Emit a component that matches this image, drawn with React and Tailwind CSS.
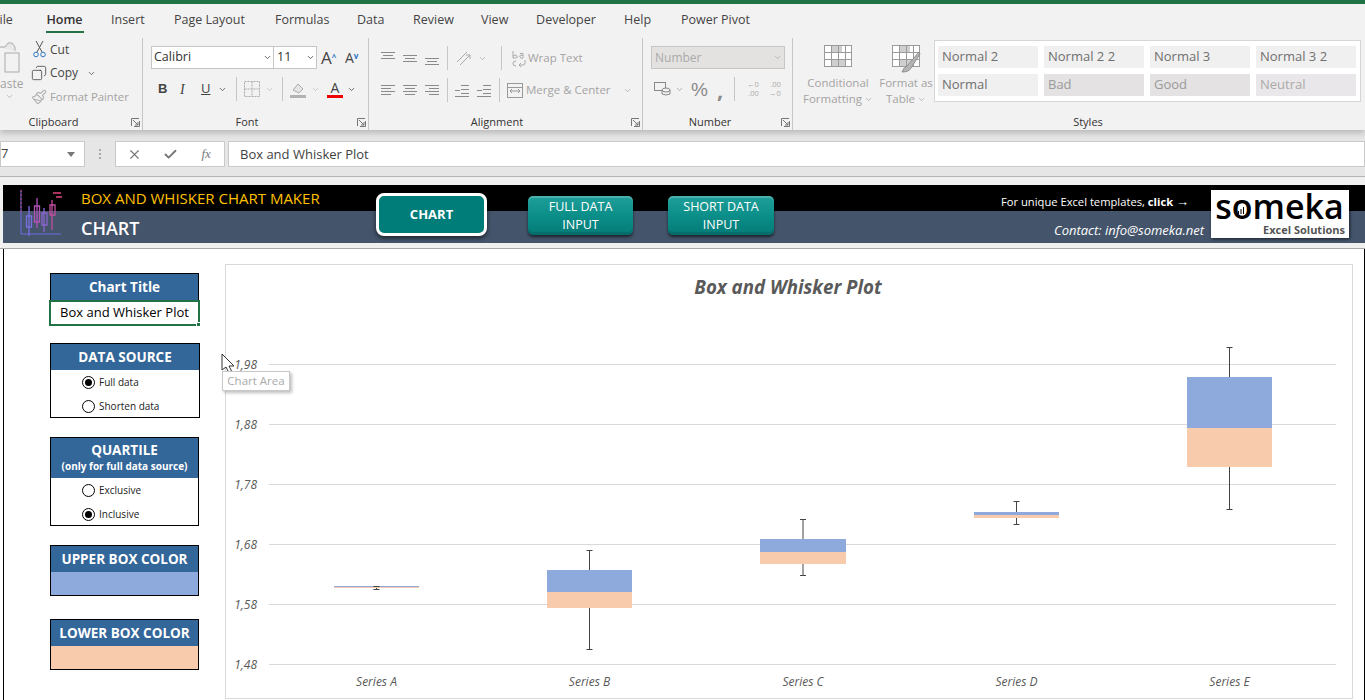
import { Copy, Paintbrush, ChevronDown, X, Check } from "lucide-react";

const tabs = [
  ["File", "w-[40px] ml-[-17px]"],
  ["Home", "w-[37px] ml-[23px]"],
  ["Insert", "w-[32px] ml-[28px]"],
  ["Page Layout", "w-[71px] ml-[31px]"],
  ["Formulas", "w-[53px] ml-[30px]"],
  ["Data", "w-[27px] ml-[29px]"],
  ["Review", "w-[40px] ml-[29px]"],
  ["View", "w-[27px] ml-[28px]"],
  ["Developer", "w-[60px] ml-[28px]"],
  ["Help", "w-[27px] ml-[28px]"],
  ["Power Pivot", "w-[68px] ml-[30px]"],
];

const Chev = ({ className = "text-[#666]" }) => <ChevronDown size={9} strokeWidth={2} className={className} />;

const Sep = () => <div className="w-px h-[24px] bg-[#c6c6c6]" />;

// three little lines, used for all the align buttons
const Lines = ({ rows, color = "#8a8a8a" }) => (
  <svg width="15" height="15" viewBox="0 0 15 15" className="shrink-0">
    {rows.map(([y, x1, x2]) => (
      <line key={y} x1={x1} x2={x2} y1={y + 0.5} y2={y + 0.5} stroke={color} />
    ))}
  </svg>
);

const Launcher = () => (
  <svg width="9" height="9" viewBox="0 0 9 9">
    <path d="M.5 8V.5H8M8.5 3v5.5H3M2 2l5 5M7 4v3H4" fill="none" stroke="#777" />
  </svg>
);

const Group = ({ label, width, labelPad = "pr-[6px]", children }) => (
  <div className={`${width} h-[92px] shrink-0 border-r border-[#c6c6c6] flex flex-col overflow-hidden`}>
    <div className="h-[77px] relative">{children}</div>
    <div className="flex items-center h-[14px] text-[11px] text-[#333]">
      <div className={`flex-1 text-center ${labelPad}`}>{label}</div>
      <div className="mr-[2px]"><Launcher /></div>
    </div>
  </div>
);

const StyleCell = ({ text, kind }) => {
  const cls = kind === "n" ? "bg-[#f1f0f0] text-[#6f6f6f]" : kind === "b" ? "bg-[#e4e2e3] text-[#9a9a9a]" : "bg-[#e9e7e9] text-[#aaa]";
  return <div className={`${cls} w-[100px] h-[22px] pl-[4px] text-[13px] leading-[21px]`}>{text}</div>;
};

const GridIcon = ({ brush }) => (
  <svg width="30" height="30" viewBox="0 0 30 30">
    <rect x="1.5" y="1.5" width="27" height="21" fill="#fff" stroke="#9a9a9a" />
    <rect x="8" y="2" width="11" height="7" fill="#cfcfcf" />
    <rect x="8" y="15" width="14" height="7" fill="#cfcfcf" />
    <path d="M1.5 8.5h27M1.5 15.5h27M8.5 1.5v21M15.5 1.5v21M22.5 1.5v21" stroke="#9a9a9a" fill="none" />
    {brush && <path d="M28 8 L16 22 q-3 1 -5 6 q7 0 9 -4 L29 10z" fill="#b5b5b5" stroke="#8f8f8f" />}
  </svg>
);

const RibbonTop = () => (
  <div className="h-[130px] bg-[#f3f2f2] shadow-[0_3px_6px_rgba(0,0,0,0.2)] relative z-10">
    <div className="h-[4px] bg-[#217346]" />
    <div className="flex h-[30px] text-[12.5px] text-[#444] items-start pt-[7px]">
      {tabs.map(([t, c]) => (
        <div key={t} className={`${c} text-center whitespace-nowrap relative shrink-0 ${t === "Home" ? "font-semibold text-[#333]" : ""}`}>
          {t}
          {t === "Home" && <div className="h-[2px] bg-[#217346] w-[38px] mt-[1px]" />}
        </div>
      ))}
    </div>
    <div className="flex pt-[4px] text-[#a3a3a3]">
      <Group label="Clipboard" width="w-[143px]" labelPad="pr-[24px]">
        <div className="flex">
          <div className="w-[33px] shrink-0 ml-[-4px] pt-[3px]">
            <svg width="28" height="32" viewBox="0 0 28 32">
              <path d="M1 6h8l3-4h4l3 4v4M1 6v22" stroke="#aaa" fill="#e8e8e8" />
              <rect x="9" y="12" width="14" height="19" fill="#f3f2f2" stroke="#aaa" />
            </svg>
            <div className="text-[12px] leading-[16px] ml-[4px] mt-[3px] w-[25px]">aste</div>
            <div className="ml-[9px]"><Chev className="text-[#aaa]" /></div>
          </div>
          <div className="flex flex-col text-[12px] ml-[2px]">
            <div className="flex items-center h-[23px] text-[#444]">
              <svg width="13" height="17" viewBox="0 0 13 17" className="mr-[4px] ml-[2px]">
                <path d="M3 0l6 11M10 0L4 11" stroke="#555" fill="none" />
                <circle cx="3" cy="13.500" r="2.300" fill="none" stroke="#2b78c5" />
                <circle cx="10" cy="13.500" r="2.300" fill="none" stroke="#2b78c5" />
              </svg>
              <span>Cut</span>
            </div>
            <div className="flex items-center h-[24px] text-[#444]"><Copy size={16} className="mr-[3px] text-[#333] scale-x-[-1]" strokeWidth={1.1} /><span>Copy</span><span className="ml-[9px]"><Chev className="text-[#444]" /></span></div>
            <div className="flex items-center h-[24px]"><Paintbrush size={16} className="mr-[3px] text-[#b0b0b0]" strokeWidth={1.6} /><span className="whitespace-nowrap text-[11.3px]">Format Painter</span></div>
          </div>
        </div>
      </Group>
      <Group label="Font" width="w-[226px]">
        <div className="pl-[8px] pt-[8px]">
          <div className="flex items-center h-[23px]">
            <div className="w-[123px] h-[23px] bg-white border border-[#c6c6c6] flex items-center pl-[2px] pr-[1px] text-[12.5px] text-[#333]"><span className="flex-1">Calibri</span><Chev className="text-[#333]" /></div>
            <div className="w-[43px] h-[23px] bg-white border border-l-0 border-[#c6c6c6] flex items-center pl-[3px] pr-[1px] text-[12.5px] text-[#333]"><span className="flex-1">11</span><Chev className="text-[#333]" /></div>
            <div className="ml-[4px] text-[17px] text-[#444] w-[24px] leading-none">A<sup className="text-[8px] text-[#2b78c5] font-bold">^</sup></div>
            <div className="text-[14px] text-[#444] w-[20px] leading-none">A<sup className="text-[8px] text-[#2b78c5] font-bold">v</sup></div>
          </div>
          <div className="flex items-center mt-[8px] h-[24px] text-[#444]">
            <span className="w-[22px] ml-[7px] font-bold text-[13px] font-['Liberation_Sans',sans-serif]">B</span>
            <span className="w-[21px] italic text-[14px] font-['Liberation_Serif',serif]">I</span>
            <span className="w-[17px] underline text-[13px]">U</span>
            <Chev className="text-[#444]" />
            <span className="ml-[9px]"><Sep /></span>
            <svg width="16" height="16" viewBox="0 0 16 16" className="ml-[7px]"><path d="M.5.5h15v15H.5zM8 .5v15M.5 8h15" fill="none" stroke="#aaa" strokeDasharray="2 1" /></svg>
            <span className="ml-[5px]"><Chev className="text-[#bbb]" /></span>
            <span className="ml-[8px]"><Sep /></span>
            <svg width="17" height="17" viewBox="0 0 17 17" className="ml-[7px]"><path d="M3 9l5-6 5 5-4 4z" fill="#e4e4e4" stroke="#aaa" /><rect x="0" y="14" width="16" height="3" fill="#b2b2b2" /></svg>
            <span className="ml-[4px]"><Chev className="text-[#bbb]" /></span>
            <div className="ml-[7px] flex flex-col items-center w-[16px]">
              <span className="text-[14px] leading-[14px] text-[#444]">A</span>
              <div className="w-[16px] h-[3px] bg-[#f00000]" />
            </div>
            <span className="ml-[4px]"><Chev className="text-[#444]" /></span>
          </div>
        </div>
      </Group>
      <Group label="Alignment" width="w-[274px]">
        <div className="pl-[12px] pt-[11px]">
          <div className="flex items-center h-[18px] gap-[7px]">
            <Lines rows={[[1, 0, 14], [4, 2, 12], [7, 0, 14]]} />
            <Lines rows={[[4, 0, 14], [7, 2, 12], [10, 0, 14]]} />
            <Lines rows={[[7, 0, 14], [10, 2, 12], [13, 0, 14]]} />
            <Sep />
            <svg width="17" height="16" viewBox="0 0 17 16"><path d="M2 12L12 2M5 15L15 5M11 5h4v4" fill="none" stroke="#aaa" /></svg>
            <span className="ml-[-1px]"><Chev className="text-[#aaa]" /></span>
            <span className="ml-[7px]"><Sep /></span>
            <span className="flex items-center ml-[2px]">
              <svg width="17" height="17" viewBox="0 0 17 17" className="shrink-0"><path d="M2 1v7M2 6q2-2 4 0t-4 2M9 3.500h3M12 3.500v4.500M12 5.500q-4-1-3 1.500t3 1M5 11q-3 0-3 2.500t3 2.500M14 10v3q0 2-2 2H8l2-2M8 15l2 2" fill="none" stroke="#aaa" /></svg>
              <span className="text-[11.500px] whitespace-nowrap">Wrap Text</span>
            </span>
          </div>
          <div className="flex items-center h-[24px] mt-[11px] gap-[7px]">
            <Lines rows={[[2, 0, 14], [5, 0, 10], [8, 0, 14], [11, 0, 10]]} />
            <Lines rows={[[2, 0, 14], [5, 2, 12], [8, 0, 14], [11, 2, 12]]} />
            <Lines rows={[[2, 0, 14], [5, 4, 14], [8, 0, 14], [11, 4, 14]]} />
            <Sep />
            <Lines rows={[[2, 6, 14], [6, 6, 14], [7, 0, 5], [10, 6, 14], [13, 0, 14]]} />
            <Lines rows={[[2, 6, 14], [6, 6, 14], [7, 0, 5], [10, 6, 14], [13, 0, 14]]} />
            <Sep />
            <span className="flex items-center">
              <svg width="19" height="15" viewBox="0 0 19 15" className="shrink-0"><rect x=".5" y=".5" width="15" height="14" fill="none" stroke="#999" /><path d="M.5 4.5h15M3 8h10M3 8l2-2M3 8l2 2M13 8l-2-2M13 8l-2 2" fill="none" stroke="#999" /></svg>
              <span className="text-[11.500px] whitespace-nowrap">Merge &amp; Center</span>
            </span>
            <span className="ml-[5px]"><Chev className="text-[#aaa]" /></span>
          </div>
        </div>
      </Group>
      <Group label="Number" width="w-[150px]" labelPad="pr-[4px]">
        <div className="pl-[8px] pt-[8px]">
          <div className="w-[134px] h-[23px] bg-[#e3e2e1] border border-[#c6c6c6] flex items-center pl-[3px] pr-[2px] text-[12px] text-[#aaa]"><span className="flex-1">Number</span><Chev className="text-[#aaa]" /></div>
          <div className="flex items-center h-[24px] mt-[8px] ml-[3px]">
            <svg width="17" height="14" viewBox="0 0 17 14"><rect x=".5" y=".5" width="11" height="8" fill="none" stroke="#888" /><ellipse cx="12" cy="8" rx="4" ry="2" fill="#f3f2f2" stroke="#888" /><path d="M8 8v4q4 2 8 0V8" fill="none" stroke="#888" /></svg>
            <span className="ml-[4px]"><Chev className="text-[#999]" /></span>
            <span className="ml-[7px] text-[19px] leading-none text-[#8a8a8a] font-['Liberation_Sans',sans-serif]">%</span>
            <span className="ml-[9px] w-[9px] text-[22px] font-bold leading-[14px] text-[#8a8a8a]">,</span>
            <span className="ml-[8px]"><Sep /></span>
            <span className="ml-[7px] w-[17px] text-[7.500px] leading-[9px] text-[#aaa] text-right">←0<br />.00</span>
            <span className="ml-[5px] w-[17px] text-[7.500px] leading-[9px] text-[#aaa] text-right">.00<br />→0</span>
          </div>
        </div>
      </Group>
      <div className="flex-1 h-[92px] flex flex-col">
        <div className="h-[76px] flex">
          <div className="w-[141px] flex text-[11.500px] leading-[16px] text-[#a3a3a3] text-center shrink-0 pt-[6px]">
            <div className="w-[80px] ml-[5px] flex flex-col items-center"><GridIcon /><span className="mt-[1px]">Conditional</span><span className="flex items-center gap-[2px]">Formatting <Chev className="text-[#aaa]" /></span></div>
            <div className="w-[56px] flex flex-col items-center"><GridIcon brush /><span className="mt-[1px] whitespace-nowrap">Format as</span><span className="flex items-center gap-[2px]">Table <Chev className="text-[#aaa]" /></span></div>
          </div>
          <div className="w-[427px] h-[62px] mt-[2px] bg-white border border-[#d6d6d6] pl-[3px] pt-[5px] grid grid-cols-[100px_100px_100px_100px] grid-rows-[22px_22px] gap-[6px] shrink-0">
            <StyleCell text="Normal 2" kind="n" />
            <StyleCell text="Normal 2 2" kind="n" />
            <StyleCell text="Normal 3" kind="n" />
            <StyleCell text="Normal 3 2" kind="n" />
            <StyleCell text="Normal" kind="n" />
            <StyleCell text="Bad" kind="b" />
            <StyleCell text="Good" kind="b" />
            <StyleCell text="Neutral" kind="x" />
          </div>
        </div>
        <div className="h-[14px] text-[11px] text-[#333] text-center pl-[18px]">Styles</div>
      </div>
    </div>
  </div>
);

const FormulaBar = () => (
  <div className="h-[47px] bg-[#e6e6e6] border-b border-[#b5b5b5] pt-[11px] flex text-[13px] text-[#444]">
    <div className="w-[85px] h-[26px] bg-white border border-[#c9c9c9] flex items-center justify-between pr-[9px] pl-0 shrink-0">
      <span>7</span>
      <span className="w-0 h-0 border-x-[4px] border-x-transparent border-t-[5px] border-t-[#777]" />
    </div>
    <div className="w-[30px] h-[26px] flex flex-col items-center justify-center gap-[2px] shrink-0">
      <span className="w-[2px] h-[2px] bg-[#aaa]" />
      <span className="w-[2px] h-[2px] bg-[#aaa]" />
      <span className="w-[2px] h-[2px] bg-[#aaa]" />
    </div>
    <div className="w-[110px] h-[26px] bg-white border border-[#c9c9c9] flex items-center text-[#777] shrink-0">
      <span className="w-[37px] flex justify-center"><X size={15} strokeWidth={1.8} /></span>
      <span className="w-[36px] flex justify-center"><Check size={15} strokeWidth={3} /></span>
      <span className="w-[36px] text-center italic font-['Liberation_Serif',serif] text-[13px]">fx</span>
    </div>
    <div className="ml-[3px] flex-1 h-[26px] bg-white border border-[#c9c9c9] pl-[11px] leading-[24px] text-[#3f3f3f]">Box and Whisker Plot</div>
  </div>
);

const BevelButton = ({ children, w, ml }) => (
  <div className={`${w} ${ml} h-[39px] mt-[11px] rounded-[5px] shadow-[0_2px_3px_rgba(0,0,0,0.6),inset_0_2px_1px_rgba(255,255,255,0.2),inset_0_-3px_1px_rgba(0,0,0,0.12)] bg-gradient-to-b from-[#1f9f9a] via-[#0b8e89] to-[#067b77] text-white text-[12.5px] leading-[18px] text-center pt-[2px] shrink-0`}>
    {children}
  </div>
);

const Banner = () => (
  <div className="ml-[3px] h-[58px] bg-[linear-gradient(#000_26px,#44546a_26px)] flex">
    <svg width="78" height="58" viewBox="0 0 78 58" className="shrink-0">
      <path d="M18 5v44h40" fill="none" stroke="#6c6be0" strokeWidth="1" />
      <path d="M18 5v24" fill="none" stroke="#c0447f" strokeDasharray="2 2" />
      <g fill="none" strokeWidth="1.3">
        <path d="M26 21v30M23.500 31h5v11h-5z" stroke="#7a6fe0" />
        <path d="M34 13v30M31.500 21h5v16h-5z" stroke="#b054b5" />
        <path d="M41 23v24M39 28h5v12h-5z" stroke="#8a66d0" />
        <path d="M49 15v30M47 20h5v10h-5z" stroke="#c04f9f" />
        <path d="M50 8h8M53 12h6" stroke="#e0457f" />
      </g>
    </svg>
    <div className="w-[295px] shrink-0 flex flex-col">
      <div className="h-[26px] text-[15px] text-[#ffc000] leading-[27px] whitespace-nowrap">BOX AND WHISKER CHART MAKER</div>
      <div className="text-[18px] font-semibold text-white leading-[34px]">CHART</div>
    </div>
    <div className="w-[111px] h-[43px] mt-[8px] rounded-[8px] border-[3px] border-white bg-[#007d78] shadow-[0_2px_4px_rgba(0,0,0,0.6)] text-white font-bold text-[13px] leading-[37px] text-center shrink-0">CHART</div>
    <BevelButton w="w-[105px]" ml="ml-[41px]">FULL DATA<br />INPUT</BevelButton>
    <BevelButton w="w-[106px]" ml="ml-[35px]">SHORT DATA<br />INPUT</BevelButton>
    <div className="w-[430px] shrink-0 text-white text-right flex flex-col">
      <div className="text-[11.200px] leading-[33px] pr-[15px] whitespace-nowrap">For unique Excel templates, <b>click <span className="font-['Liberation_Sans',sans-serif] text-[13px]">→</span></b></div>
      <div className="text-[13px] italic leading-[25px]">Contact: info@someka.net</div>
    </div>
    <div className="relative w-[138px] h-[48px] ml-[7px] mt-[5px] bg-white shadow-[1px_1px_3px_rgba(0,0,0,0.6)] shrink-0 flex flex-col pr-[4px] text-right">
      <div className="h-[33px] text-[34px] leading-[33px] font-semibold text-black text-center pl-[3px]">someka</div>
      <div className="text-[11px] leading-[13px] font-bold text-[#555]">Excel Solutions</div>
      <svg width="8" height="8" viewBox="0 0 8 8" className="absolute left-[26px] top-[16px]"><path d="M1 8V5h1v3zM3.500 8V3h1v5zM6 8V1h1v7z" fill="#000" /></svg>
    </div>
  </div>
);

const Head = ({ children, h = "h-[26px]" }) => (
  <div className={`${h} bg-[#336699] text-white font-bold text-[13.500px] flex flex-col items-center justify-center leading-[18px] whitespace-nowrap`}>
    {children}
  </div>
);

const Radio = ({ label, on }) => (
  <div className="flex items-center h-[24px] pl-[31px] pt-[1px] text-[10px] text-[#222]">
    <span className="w-[13px] h-[13px] rounded-full border border-black flex items-center justify-center mr-[4px]">
      {on && <span className="w-[7px] h-[7px] rounded-full bg-black" />}
    </span>
    {label}
  </div>
);

const Side = () => (
  <div className="w-[149px] ml-[46px] mt-[24px] shrink-0">
    <div className="border border-black border-b-0">
      <Head>Chart Title</Head>
    </div>
    <div className="relative border-2 border-[#217346] h-[26px] -mx-[1px] text-[13px] leading-[20px] text-center text-black whitespace-nowrap">
      Box and Whisker Plot
      <span className="absolute -right-[3px] -bottom-[3px] w-[5px] h-[5px] bg-[#217346] border border-white" />
    </div>
    <div className="border border-black mt-[17px] h-[75px] w-[150px]">
      <Head>DATA SOURCE</Head>
      <Radio label="Full data" on />
      <Radio label="Shorten data" />
    </div>
    <div className="border border-black mt-[19px] h-[89px]">
      <Head h="h-[40px] pb-[2px]">
        <span>QUARTILE</span>
        <span className="text-[10px] leading-[14px]">(only for full data source)</span>
      </Head>
      <Radio label="Exclusive" />
      <Radio label="Inclusive" on />
    </div>
    <div className="border border-black mt-[19px] h-[51px]">
      <Head>UPPER BOX COLOR</Head>
      <div className="h-[23px] bg-[#8ea9db]" />
    </div>
    <div className="border border-black mt-[23px] h-[51px]">
      <Head>LOWER BOX COLOR</Head>
      <div className="h-[23px] bg-[#f8cbad]" />
    </div>
  </div>
);

const grid = [[364.5, "1,98"], [424.5, "1,88"], [484.5, "1,78"], [544.5, "1,68"], [604.5, "1,58"], [664.5, "1,48"]];
// x, width, upper top, middle, lower bottom, whisker top, whisker bottom
const series = [
  ["Series A", 334, 85, 586, 587, 588, 586, 589],
  ["Series B", 547, 85, 570, 592, 608, 550, 649],
  ["Series C", 760, 86, 539, 552, 564, 519, 575],
  ["Series D", 974, 85, 512, 515, 518, 501, 524],
  ["Series E", 1187, 85, 377, 428, 467, 347, 509],
];

const Chart = () => (
  <svg width="1128" height="435" viewBox="225 264 1128 435" className="ml-[26px] mt-[15px] shrink-0 block">
    <rect x="225.5" y="264.5" width="1127" height="434" fill="#fff" stroke="#d9d9d9" />
    <text x="788" y="294" textAnchor="middle" fontSize="18.700" fontWeight="700" fontStyle="italic" fill="#595959">Box and Whisker Plot</text>
    {grid.map(([y, t]) => (
      <g key={t}>
        <line x1="269" x2="1336" y1={y} y2={y} stroke="#d9d9d9" />
        <text x="257" y={y + 4} textAnchor="end" fontSize="12" fontStyle="italic" fill="#595959">{t}</text>
      </g>
    ))}
    {series.map(([name, x, w, a, b, c, t, bot]) => {
      const mid = x + w / 2;
      return (
        <g key={name}>
          <rect x={x} y={a} width={w} height={b - a} fill="#8ea9db" />
          <rect x={x} y={b} width={w} height={c - b} fill="#f8cbad" />
          <path d={`M${mid} ${t}V${a}M${mid} ${c}V${bot}M${mid - 3} ${t}.5h6M${mid - 3} ${bot}.5h6`} stroke="#444" fill="none" />
          <text x={mid} y="686" textAnchor="middle" fontSize="12" fontStyle="italic" fill="#595959">{name}</text>
        </g>
      );
    })}
  </svg>
);

export default function App() {
  return (
    <div className="w-[1365px] h-[700px] overflow-hidden bg-white relative font-['Open_Sans',sans-serif]">
      <RibbonTop />
      <FormulaBar />
      <div className="bg-[#f0f0f0] pt-[8px] h-[72px] border-b border-[#a8a8a8]">
        <Banner />
      </div>
      <div className="flex ml-[3px] border-l border-black h-[451px] border-r mr-0">
        <Side />
        <Chart />
      </div>
      {/* mouse pointer and chart tooltip */}
      <svg width="14" height="22" viewBox="0 0 14 22" className="absolute left-[221px] top-[353px]">
        <path d="M1 1v16l4-3 3 6 3-1-3-6h5z" fill="#fff" stroke="#333" />
      </svg>
      <div className="absolute left-[222px] top-[371px] w-[68px] h-[20px] bg-white border border-[#c8c8c8] shadow-[2px_2px_3px_rgba(0,0,0,0.25)] text-[11.500px] text-[#aaa] text-center leading-[18px]">Chart Area</div>
    </div>
  );
}
